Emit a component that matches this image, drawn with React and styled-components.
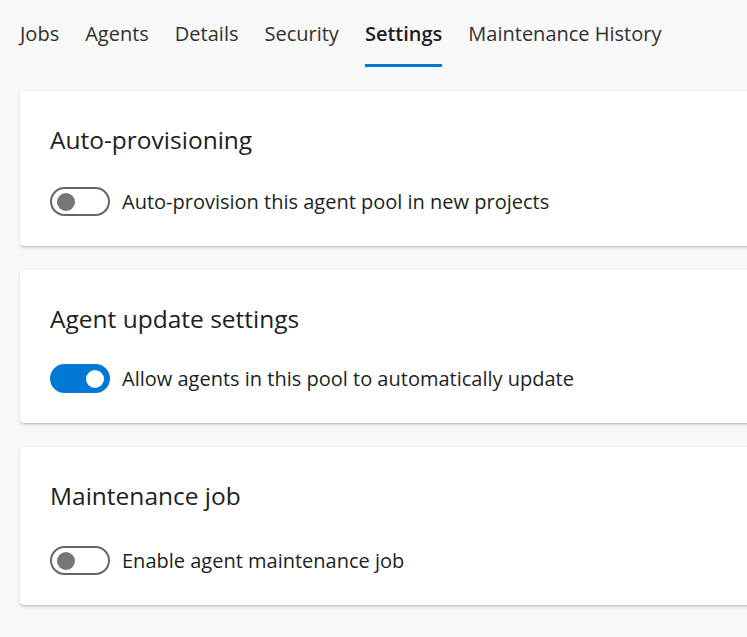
import React from 'react';
import styled, { createGlobalStyle } from 'styled-components';

const GlobalStyle = createGlobalStyle`
  html, body {
    margin: 0;
    padding: 0;
    background: #f8f8f8;
    overflow: hidden;
  }
  body {
    font-family: "Open Sans", "Noto Sans", sans-serif;
    color: #201f1e;
  }
`;

const Page = styled.div`
  width: 747px;
  height: 637px;
  overflow: hidden;
  padding-left: 20px;
  box-sizing: border-box;
`;

const TabBar = styled.div`
  display: flex;
  gap: 26px;
  height: 67px;
  align-items: stretch;
`;

const Tab = styled.div`
  display: flex;
  align-items: center;
  padding-top: 2px;
  font-size: 20px;
  font-weight: ${({ $active }) => ($active ? 600 : 400)};
  color: ${({ $active }) => ($active ? '#201f1e' : '#323130')};
  white-space: nowrap;
  border-bottom: 3px solid ${({ $active }) => ($active ? '#0078d4' : 'transparent')};
  box-sizing: border-box;
`;

const Cards = styled.div`
  display: flex;
  flex-direction: column;
  gap: 24px;
  padding-top: 24px;
`;

const Card = styled.section`
  width: 820px;
  background: #fff;
  border-radius: 4px;
  box-shadow: 0 1.6px 3.6px rgba(0, 0, 0, 0.13), 0 0.3px 0.9px rgba(0, 0, 0, 0.11);
  padding: 31px 30px 30px;
  box-sizing: border-box;
`;

const Title = styled.h2`
  margin: 0;
  font-size: 24.5px;
  font-weight: 400;
  line-height: 36px;
  color: #201f1e;
`;

const Row = styled.label`
  display: flex;
  align-items: center;
  gap: 12px;
  margin-top: ${({ $gap }) => $gap}px;
  font-size: 20px;
  color: #201f1e;
`;

const Track = styled.span`
  position: relative;
  display: inline-block;
  width: 60px;
  height: 29px;
  border-radius: 15px;
  box-sizing: border-box;
  border: 2px solid ${({ $on }) => ($on ? '#0078d4' : '#666')};
  background: ${({ $on }) => ($on ? '#0078d4' : '#fff')};
  flex-shrink: 0;
`;

const Knob = styled.span`
  position: absolute;
  top: 3.5px;
  left: ${({ $on }) => ($on ? '34px' : '5px')};
  width: 18px;
  height: 18px;
  border-radius: 50%;
  background: ${({ $on }) => ($on ? '#fff' : '#777')};
`;

const Toggle = ({ on }) => (
  <Track $on={on}>
    <Knob $on={on} />
  </Track>
);

const tabs = ['Jobs', 'Agents', 'Details', 'Security', 'Settings', 'Maintenance History'];

const sections = [
  { title: 'Auto-provisioning', label: 'Auto-provision this agent pool in new projects', on: false, gap: 29 },
  { title: 'Agent update settings', label: 'Allow agents in this pool to automatically update', on: true, gap: 27 },
  { title: 'Maintenance job', label: 'Enable agent maintenance job', on: false, gap: 32 },
];

export default function App() {
  return (
    <Page>
      <GlobalStyle />
      <TabBar>
        {tabs.map((t) => (
          <Tab key={t} $active={t === 'Settings'}>
            {t}
          </Tab>
        ))}
      </TabBar>
      <Cards>
        {sections.map((s) => (
          <Card key={s.title}>
            <Title>{s.title}</Title>
            <Row $gap={s.gap}>
              <Toggle on={s.on} />
              {s.label}
            </Row>
          </Card>
        ))}
      </Cards>
    </Page>
  );
}
